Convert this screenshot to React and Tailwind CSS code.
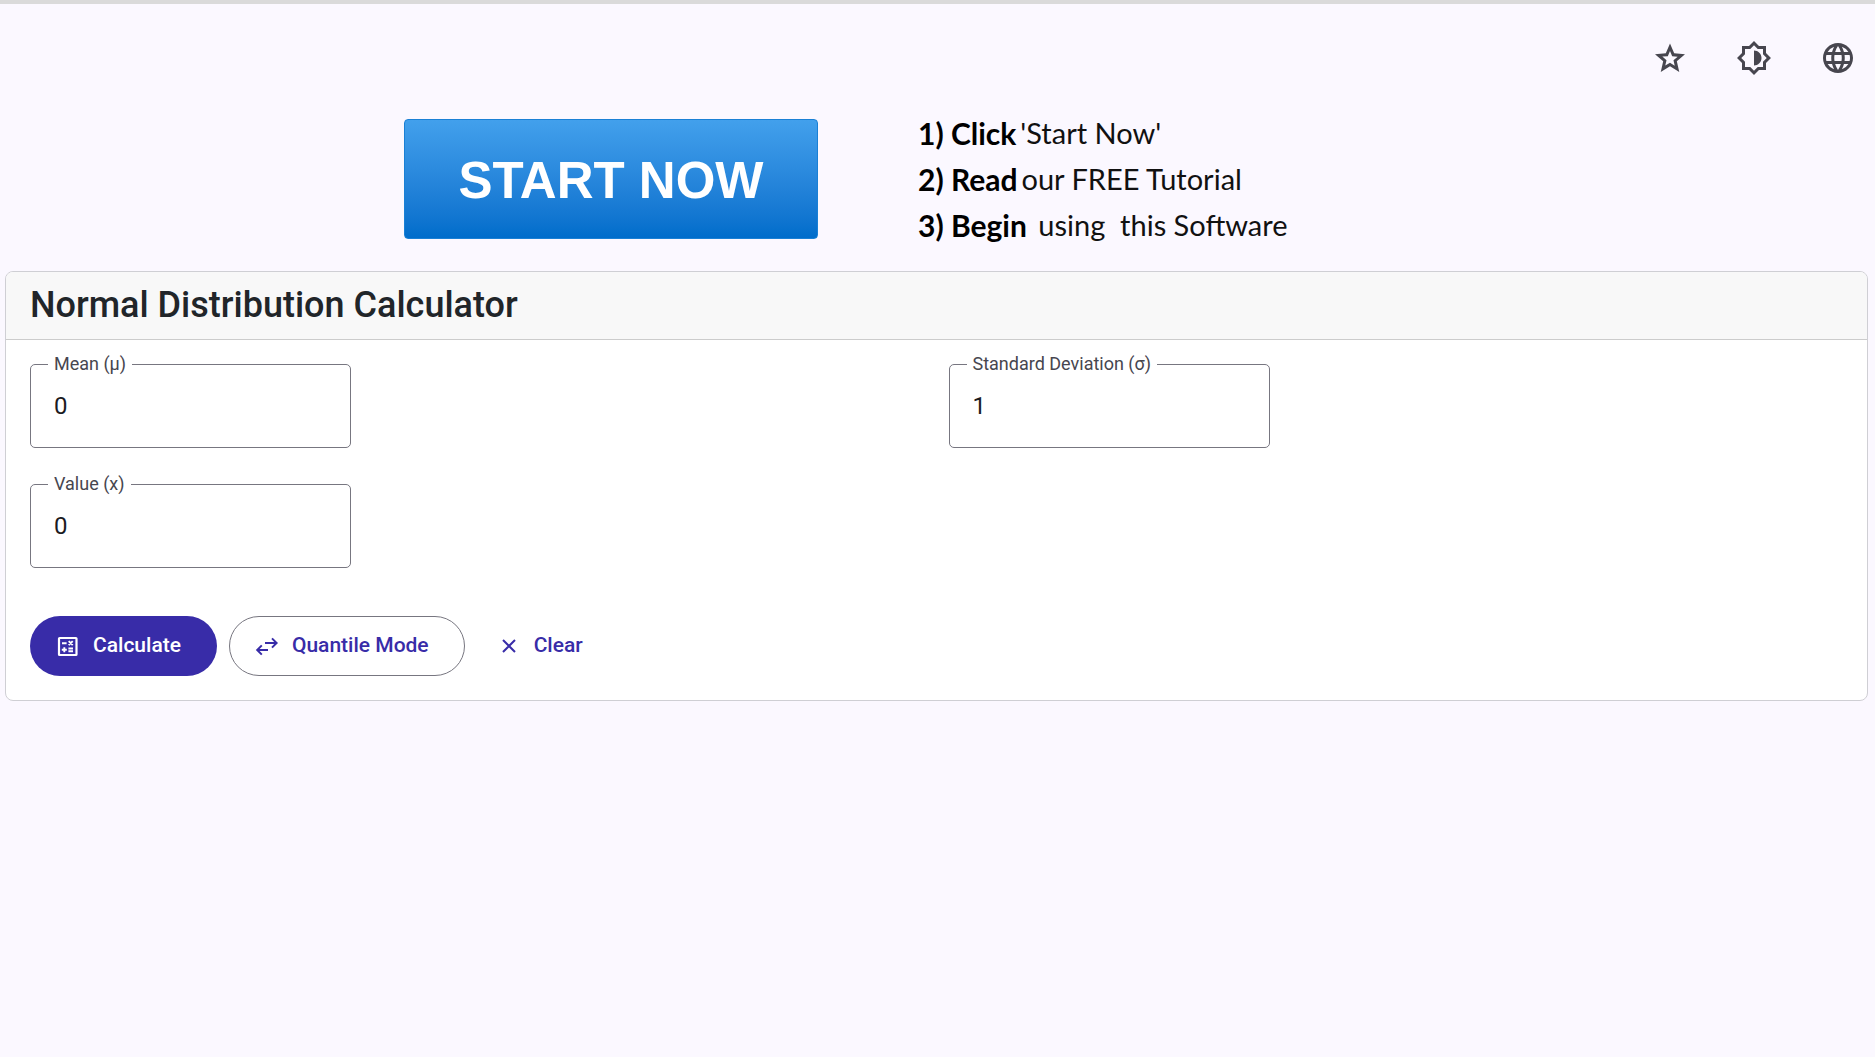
import React, { useState } from 'react';
import { MdLanguage } from 'react-icons/md';

function StarIcon() {
  return (
    <svg className="size-9" viewBox="0 -930 960 960" fill="currentColor">
      <path d="m354-247 126-76 126 77-33-144 111-96-146-13-58-136-58 135-146 13 111 97-33 143ZM233-80l65-281L80-550l288-25 112-265 112 265 288 25-218 189 65 281-247-149L233-80Z" />
    </svg>
  );
}

function ThemeIcon() {
  return (
    <svg className="size-9" viewBox="0 0 24 24" fill="currentColor">
      <path d="M20 8.69V4h-4.69L12 .69 8.69 4H4v4.69L.69 12 4 15.31V20h4.69L12 23.31 15.31 20H20v-4.69L23.31 12 20 8.69zm-2 5.79V18h-3.52L12 20.48 9.52 18H6v-3.52L3.52 12 6 9.52V6h3.52L12 3.52 14.48 6H18v3.52L20.48 12 18 14.48zM12 7v10c2.76 0 5-2.24 5-5s-2.24-5-5-5z" />
    </svg>
  );
}

function CalculateIcon() {
  return (
    <svg className="size-[26px]" viewBox="0 0 26 26" fill="none" stroke="currentColor">
      <rect x="5" y="5" width="17.5" height="17" rx="0.6" strokeWidth="2.2" />
      <path d="M8 10.3h4.6M14.7 8.1l4 4M18.7 8.1l-4 4M7.8 16.8h5M10.3 14.3v5M14.4 15.5h4.6M14.4 18.2h4.6" strokeWidth="1.9" />
    </svg>
  );
}

function SwapIcon() {
  return (
    <svg className="size-[26px]" viewBox="0 0 26 26" fill="none" stroke="currentColor" strokeWidth="2">
      <path d="M11 10h11M18 5.4 22.6 10 18 14.6M14 17H3.5M7.8 12.4 3.2 17l4.6 4.6" />
    </svg>
  );
}

function ClearIcon() {
  return (
    <svg className="size-[26px]" viewBox="0 0 26 26" fill="none" stroke="currentColor" strokeWidth="2">
      <path d="M8 7 20 19M20 7 8 19" />
    </svg>
  );
}

function NumberField({ id, label, value, onChange }) {
  return (
    <fieldset className="h-[94px] w-[321px] rounded-[5px] border border-[#777680] pl-[17px] pr-4">
      <legend className="px-[6px] text-[18px] leading-[20px] text-[#47464f]">
        <label htmlFor={id}>{label}</label>
      </legend>
      <input
        id={id}
        type="text"
        value={value}
        onChange={(e) => onChange(e.target.value)}
        className="block h-[64px] w-full bg-transparent px-[6px] text-[24px] text-[#1b1b1f] focus:outline-none"
      />
    </fieldset>
  );
}

function Step({ title, children }) {
  return (
    <li className="flex items-center gap-1 whitespace-nowrap">
      <b className="text-[30px] font-bold text-black">{title}</b>
      <span>{children}</span>
    </li>
  );
}

function App() {
  const [mean, setMean] = useState('0');
  const [deviation, setDeviation] = useState('1');
  const [x, setX] = useState('0');

  const handleClear = () => {
    setMean('');
    setDeviation('');
    setX('');
  };

  return (
    <div className="min-h-screen border-t-4 border-[#dadada] bg-[#fbf8ff] font-[Roboto,sans-serif]">
      <header className="flex justify-end gap-12 px-[19px] pt-9 text-[#47464f]">
        <button type="button" aria-label="Favorite">
          <StarIcon />
        </button>
        <button type="button" aria-label="Theme">
          <ThemeIcon />
        </button>
        <button type="button" aria-label="Language">
          <MdLanguage size={36} />
        </button>
      </header>

      <section className="flex items-center justify-center gap-[100px] pt-[34px] pr-[173px]">
        <a
          href="#start"
          className="flex h-[120px] w-[414px] items-center justify-center rounded-[4px] border border-[#1a80d5] bg-linear-to-b from-[#42a0ec] to-[#006dcb] pt-1 font-['Liberation_Sans',sans-serif] text-[51px] font-bold text-white"
        >
          START NOW
        </a>
        <ol className="w-[380px] font-[Lato,sans-serif] text-[29px] leading-[46px] text-[#111111]">
          <Step title="1) Click">'Start Now'</Step>
          <Step title="2) Read">our FREE Tutorial</Step>
          <Step title="3) Begin">&nbsp;using &nbsp;this Software</Step>
        </ol>
      </section>

      <main className="mx-[5px] mt-[23px] mr-[7px] rounded-[8px] border border-[#cfcfd4] bg-white">
        <h1 className="rounded-t-[7px] border-b border-[#cccccc] bg-[#f8f8f8] px-6 py-3 text-[36px] leading-[43px] font-medium text-[#212529]">
          Normal Distribution Calculator
        </h1>
        <form className="px-6 pt-[14px] pb-6" onSubmit={(e) => e.preventDefault()}>
          <div className="grid grid-cols-2 gap-x-6 gap-y-[26px]">
            <NumberField id="mean" label="Mean (μ)" value={mean} onChange={setMean} />
            <NumberField id="deviation" label="Standard Deviation (σ)" value={deviation} onChange={setDeviation} />
            <NumberField id="x" label="Value (x)" value={x} onChange={setX} />
          </div>
          <div className="mt-12 flex gap-3 text-[21px] font-medium text-[#382ca8]">
            <button type="submit" className="flex h-[60px] items-center gap-[13px] rounded-full bg-[#382ca8] pr-9 pl-6 text-white">
              <CalculateIcon />
              Calculate
            </button>
            <button type="button" className="flex h-[60px] items-center gap-3 rounded-full border border-[#777680] pr-[35px] pl-6">
              <SwapIcon />
              Quantile Mode
            </button>
            <button type="button" onClick={handleClear} className="flex h-[60px] items-center gap-[13px] px-[18px]">
              <ClearIcon />
              Clear
            </button>
          </div>
        </form>
      </main>
    </div>
  );
}

export default App;
